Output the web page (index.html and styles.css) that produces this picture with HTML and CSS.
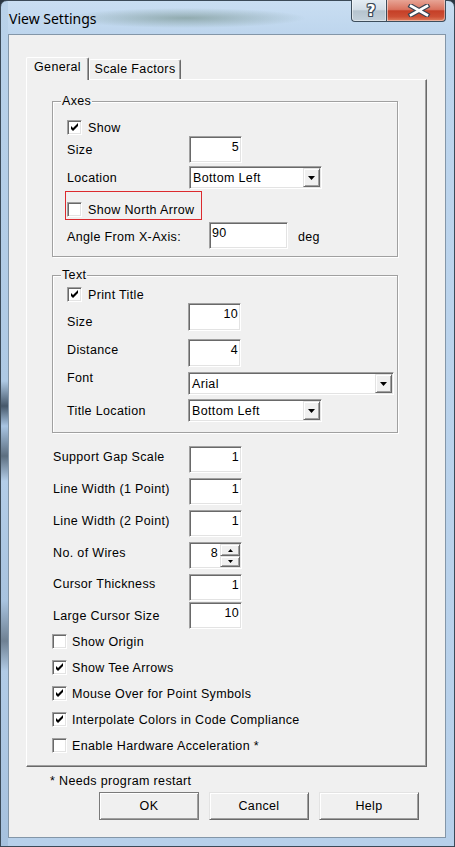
FILE: index.html
```html
<!DOCTYPE html>
<html>
<head>
<meta charset="utf-8">
<title>View Settings</title>
<link rel="stylesheet" href="styles.css">
</head>
<body>
<div class="window">
  <div class="titlebar">
    <span class="title">View Settings</span>
    <div class="caption">
      <div class="cbtn help"><span class="q">?</span></div>
      <div class="cbtn close">
        <svg class="xicon" width="24" height="13" viewBox="0 0 24 13">
          <path d="M4 2 L20 11 M20 2 L4 11" stroke="#3a4452" stroke-width="5" stroke-linecap="square" fill="none"/>
          <path d="M4 2 L20 11 M20 2 L4 11" stroke="#ffffff" stroke-width="2.6" stroke-linecap="square" fill="none"/>
        </svg>
      </div>
    </div>
  </div>
  <div class="client">
    <div class="tabs">
      <div class="tab active">General</div>
      <div class="tab sf">Scale Factors</div>
    </div>
    <div class="pane">
      <div class="group axes">
        <span class="legend">Axes</span>
        <div class="row mt18 h15">
          <span class="cb"><svg width="13" height="13" viewBox="0 0 13 13"><polygon points="3,5 5,7 10,2 10,5 5,10 3,8" fill="#000"/></svg></span>
          <span class="cbl">Show</span>
        </div>
        <div class="row mt1">
          <span class="lbl w122 lt7">Size</span>
          <span class="edit num w53 h27">5</span>
        </div>
        <div class="row mt3">
          <span class="lbl w122 lt5">Location</span>
          <span class="combo w133 h23"><span class="val">Bottom Left</span><span class="dd"><svg width="7" height="4" viewBox="0 0 7 4"><polygon points="0,0 7,0 3.5,4" fill="#000"/></svg></span></span>
        </div>
        <div class="row mt2">
          <div class="hilite">
            <span class="cb"></span>
            <span class="cbl">Show North Arrow</span>
          </div>
        </div>
        <div class="row mt2">
          <span class="lbl w142 lt8">Angle From X-Axis:</span>
          <span class="edit w79 h27">90</span>
          <span class="unit lt8">deg</span>
        </div>
      </div>

      <div class="group text mt18">
        <span class="legend">Text</span>
        <div class="row mt11 h15">
          <span class="cb"><svg width="13" height="13" viewBox="0 0 13 13"><polygon points="3,5 5,7 10,2 10,5 5,10 3,8" fill="#000"/></svg></span>
          <span class="cbl">Print Title</span>
        </div>
        <div class="row mt1">
          <span class="lbl w121 lt12">Size</span>
          <span class="edit num w53 h28">10</span>
        </div>
        <div class="row mt8">
          <span class="lbl w121 lt4">Distance</span>
          <span class="edit num w53 h28">4</span>
        </div>
        <div class="row mt5">
          <span class="lbl w121 ltm1">Font</span>
          <span class="combo w206 h23"><span class="val">Arial</span><span class="dd"><svg width="7" height="4" viewBox="0 0 7 4"><polygon points="0,0 7,0 3.5,4" fill="#000"/></svg></span></span>
        </div>
        <div class="row mt4">
          <span class="lbl w121 lt5">Title Location</span>
          <span class="combo w134 h23"><span class="val">Bottom Left</span><span class="dd"><svg width="7" height="4" viewBox="0 0 7 4"><polygon points="0,0 7,0 3.5,4" fill="#000"/></svg></span></span>
        </div>
      </div>

      <div class="fields">
        <div class="row mt13">
          <span class="lbl w136 lt4">Support Gap Scale</span>
          <span class="edit num w53 h27">1</span>
        </div>
        <div class="row mt5">
          <span class="lbl w136 lt4">Line Width (1 Point)</span>
          <span class="edit num w53 h27">1</span>
        </div>
        <div class="row mt5">
          <span class="lbl w136 lt4">Line Width (2 Point)</span>
          <span class="edit num w53 h27">1</span>
        </div>
        <div class="row mt5">
          <span class="lbl w136 lt4">No. of Wires</span>
          <span class="edit spin w53 h27">
            <span class="sv">8</span>
            <span class="spins">
              <span class="sb up"><svg width="5" height="3" viewBox="0 0 5 3"><polygon points="2.5,0 5,3 0,3" fill="#000"/></svg></span>
              <span class="sb dn"><svg width="5" height="3" viewBox="0 0 5 3"><polygon points="0,0 5,0 2.5,3" fill="#000"/></svg></span>
            </span>
          </span>
        </div>
        <div class="row mt5">
          <span class="lbl w136 lt3">Cursor Thickness</span>
          <span class="edit num w53 h27">1</span>
        </div>
        <div class="row mt1">
          <span class="lbl w136 lt7">Large Cursor Size</span>
          <span class="edit num w53 h27">10</span>
        </div>
      </div>

      <div class="checks">
        <div class="row mt5 h15">
          <span class="cb"></span>
          <span class="cbl">Show Origin</span>
        </div>
        <div class="row mt11 h15">
          <span class="cb"><svg width="13" height="13" viewBox="0 0 13 13"><polygon points="3,5 5,7 10,2 10,5 5,10 3,8" fill="#000"/></svg></span>
          <span class="cbl">Show Tee Arrows</span>
        </div>
        <div class="row mt11 h15">
          <span class="cb"><svg width="13" height="13" viewBox="0 0 13 13"><polygon points="3,5 5,7 10,2 10,5 5,10 3,8" fill="#000"/></svg></span>
          <span class="cbl">Mouse Over for Point Symbols</span>
        </div>
        <div class="row mt11 h15">
          <span class="cb"><svg width="13" height="13" viewBox="0 0 13 13"><polygon points="3,5 5,7 10,2 10,5 5,10 3,8" fill="#000"/></svg></span>
          <span class="cbl">Interpolate Colors in Code Compliance</span>
        </div>
        <div class="row mt11 h15">
          <span class="cb"></span>
          <span class="cbl">Enable Hardware Acceleration *</span>
        </div>
      </div>
    </div>
    <div class="note">* Needs program restart</div>
    <div class="buttons">
      <div class="pbtn default">OK</div>
      <div class="pbtn">Cancel</div>
      <div class="pbtn">Help</div>
    </div>
  </div>
</div>
</body>
</html>
```
FILE: styles.css
```css
* { box-sizing: border-box; }
html, body { margin: 0; padding: 0; }
body {
  width: 455px;
  height: 847px;
  overflow: hidden;
  background: #2a3642;
  font-family: "Liberation Sans", Arial, sans-serif;
  font-size: 12.5px;
  letter-spacing: 0.35px;
  line-height: 14px;
  color: #000;
}

.window {
  width: 455px;
  height: 847px;
  border: 1px solid #3b4a58;
  border-radius: 7px 7px 0 0;
  padding: 0 8px 8px 7px;
  display: flex;
  flex-direction: column;
  background:
    radial-gradient(120px 10px at 185px 17px, rgba(112,140,132,0.6), rgba(112,140,132,0)),
    linear-gradient(180deg, #b9d2ea 0, #aec9e4 380px, #46586a 405px, #a9c5e3 425px, #5c6e80 455px, #b3cde8 480px, #a8c3df 600px, #6f8193 640px, #b1cbe6 670px, #a6c1de 847px) 0 0 / 7px 100% no-repeat,
    linear-gradient(180deg, #c9def2 0, #bdd5ed 34px, #b7d0ea 100%);
}

.titlebar {
  height: 33px;
  display: flex;
  align-items: flex-start;
}
.title {
  font-family: "Noto Sans", "Open Sans", sans-serif;
  font-size: 14px;
  letter-spacing: 0;
  line-height: 18px;
  margin-top: 9px;
  padding-left: 1px;
  color: #000;
}
.caption {
  margin-left: auto;
  margin-top: -1px;
  display: flex;
}
.cbtn {
  height: 22px;
  border: 1px solid #3d4d5c;
  border-top: none;
  display: flex;
  align-items: center;
  justify-content: center;
  box-shadow: inset 1px 0 0 rgba(255,255,255,0.5), inset -1px -1px 0 rgba(255,255,255,0.4);
}
.help {
  width: 35px;
  border-right: none;
  border-radius: 0 0 0 4px;
  background: linear-gradient(180deg, #e4ecf3 0, #d2dde6 45%, #b5c3ce 52%, #c3d0da 100%);
}
.close {
  width: 60px;
  border-radius: 0 0 4px 0;
  background: linear-gradient(180deg, #e7a495 0, #d9735f 45%, #c53f27 52%, #cd4f34 80%, #e0805f 100%);
}
.q {
  font-family: "DejaVu Sans", sans-serif;
  font-weight: bold;
  font-size: 15px;
  letter-spacing: 0;
  line-height: 16px;
  color: #fff;
  margin-left: 4px;
  text-shadow: 1px 0 0 #3e4a58, -1px 0 0 #3e4a58, 0 1px 0 #3e4a58, 0 -1px 0 #3e4a58, 1px 1px 0 #3e4a58, -1px -1px 0 #3e4a58, 1px -1px 0 #3e4a58, -1px 1px 0 #3e4a58;
}
.xicon { display: block; margin-left: 6px; }

.client {
  flex: 1;
  background: #f0f0f0;
  border: 1px solid #8396a8;
  padding: 22px 0 0 17px;
}

.tabs {
  display: flex;
  height: 22px;
  align-items: flex-end;
}
.tab {
  height: 20px;
  background: #f0f0f0;
  border-top: 1px solid #fff;
  border-left: 1px solid #fff;
  border-right: 1px solid #696969;
  box-shadow: inset -1px 0 0 #a0a0a0;
  border-radius: 2px 2px 0 0;
  text-align: center;
  padding-top: 2px;
}
.tab.active {
  width: 63px;
  height: 23px;
  margin-bottom: -1px;
  position: relative;
  z-index: 1;
}
.tab.sf { width: 92px; }

.pane {
  width: 401px;
  height: 688px;
  border-top: 1px solid #fff;
  border-left: 1px solid #fff;
  border-right: 1px solid #696969;
  border-bottom: 1px solid #696969;
  box-shadow: inset -1px -1px 0 #a0a0a0;
  padding: 21px 0 0 25px;
}

.group {
  position: relative;
  width: 346px;
  border: 1px solid #a0a0a0;
  box-shadow: inset 1px 1px 0 #fff, 1px 1px 0 #fff;
  padding: 0 0 7px 14px;
}
.group.text { padding-bottom: 10px; }
.legend {
  position: absolute;
  top: -8px;
  left: 8px;
  padding: 0 1px;
  background: #f0f0f0;
}

.row { display: flex; align-items: flex-start; }
.h15 { height: 15px; align-items: center; }
.mt1 { margin-top: 1px; }
.mt2 { margin-top: 2px; }
.mt3 { margin-top: 3px; }
.mt4 { margin-top: 4px; }
.mt5 { margin-top: 5px; }
.mt8 { margin-top: 8px; }
.mt11 { margin-top: 11px; }
.mt13 { margin-top: 13px; }
.mt18 { margin-top: 18px; }

.lbl { flex: none; white-space: nowrap; }
.w121 { width: 121px; }
.w122 { width: 122px; }
.w136 { width: 136px; }
.w142 { width: 142px; }
.lt3 { margin-top: 3px; }
.lt4 { margin-top: 4px; }
.lt5 { margin-top: 5px; }
.lt7 { margin-top: 7px; }
.lt8 { margin-top: 8px; }
.lt12 { margin-top: 12px; }
.ltm1 { margin-top: -1px; }

.w53 { width: 53px; }
.w79 { width: 79px; }
.w133 { width: 133px; }
.w134 { width: 134px; }
.w206 { width: 206px; }
.h23 { height: 23px; }
.h27 { height: 27px; }
.h28 { height: 28px; }

.edit, .combo {
  flex: none;
  background: #fff;
  border-top: 1px solid #a0a0a0;
  border-left: 1px solid #a0a0a0;
  border-right: 1px solid #fff;
  border-bottom: 1px solid #fff;
  box-shadow: inset 1px 1px 0 #696969, inset -1px -1px 0 #e3e3e3;
}
.edit {
  padding: 3px 2px 0 2px;
}
.edit.num { text-align: right; }
.unit { margin-left: 10px; }

.combo {
  display: flex;
  align-items: stretch;
  padding: 1px;
}
.combo .val {
  flex: 1;
  padding-left: 2px;
  display: flex;
  align-items: center;
}
.dd, .sb, .pbtn {
  background: #f0f0f0;
  border-top: 1px solid #e3e3e3;
  border-left: 1px solid #e3e3e3;
  border-right: 1px solid #696969;
  border-bottom: 1px solid #696969;
  box-shadow: inset 1px 1px 0 #fff, inset -1px -1px 0 #a0a0a0;
}
.dd {
  width: 17px;
  display: flex;
  align-items: center;
  justify-content: center;
}
.dd svg { display: block; margin-top: 1px; }

.edit.spin {
  display: flex;
  padding: 1px;
}
.sv {
  flex: 1;
  text-align: right;
  padding: 2px 2px 0 0;
}
.spins {
  width: 20px;
  display: flex;
  flex-direction: column;
}
.sb {
  display: flex;
  align-items: center;
  justify-content: center;
}
.sb.up { height: 12px; }
.sb.dn { height: 11px; }
.sb svg { display: block; }

.cb {
  flex: none;
  width: 15px;
  height: 15px;
  background: #fff;
  border-top: 1px solid #a0a0a0;
  border-left: 1px solid #a0a0a0;
  border-right: 1px solid #fff;
  border-bottom: 1px solid #fff;
  box-shadow: inset 1px 1px 0 #696969, inset -1px -1px 0 #e3e3e3;
}
.cb svg { display: block; }
.cbl { margin-left: 5px; white-space: nowrap; }
.group .cbl { margin-left: 6px; }

.hilite {
  width: 137px;
  height: 29px;
  margin-left: -2px;
  border: 1px solid #dc2a2e;
  display: flex;
  align-items: center;
  padding: 8px 0 0 1px;
}

.fields { padding-left: 1px; }

.note {
  margin-top: 7px;
  margin-left: 24px;
}
.buttons {
  display: flex;
  gap: 10px;
  margin-top: 4px;
  margin-left: 73px;
}
.pbtn {
  width: 100px;
  height: 28px;
  display: flex;
  align-items: center;
  justify-content: center;
}
.pbtn.default {
  outline: 1px solid #7a7a7a;
  outline-offset: -1px;
}
```
